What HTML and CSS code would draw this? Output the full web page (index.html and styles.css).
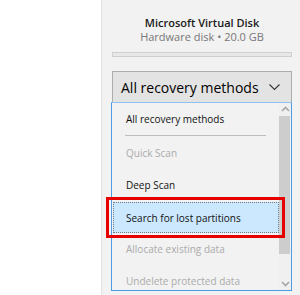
FILE: index.html
```html
<!DOCTYPE html>
<html>
<head>
<meta charset="utf-8">
<link rel="stylesheet" href="styles.css">
</head>
<body>
<div class="app">
  <div class="side"></div>
  <div class="panel">
    <div class="disk-title">Microsoft Virtual Disk</div>
    <div class="disk-sub">Hardware disk • 20.0 GB</div>
    <div class="progress"></div>
    <div class="combo">
      <span class="combo-text">All recovery methods</span>
      <svg class="chev" width="11" height="7" viewBox="0 0 11 7"><polyline points="0.5,0.5 5.5,5.5 10.5,0.5" fill="none" stroke="#333" stroke-width="1.1"/></svg>
    </div>
    <div class="list">
      <div class="items">
        <div class="item">All recovery methods</div>
        <div class="sep"></div>
        <div class="item disabled">Quick Scan</div>
        <div class="item">Deep Scan</div>
        <div class="item selected"><span class="sel-box">Search for lost partitions</span></div>
        <div class="item disabled">Allocate existing data</div>
        <div class="item disabled">Undelete protected data</div>
      </div>
      <div class="scrollbar">
        <svg class="arrow" width="9" height="6" viewBox="0 0 9 6"><polyline points="1,5 4.5,1.5 8,5" fill="none" stroke="#a6a6a6" stroke-width="1.6"/></svg>
        <div class="track"><div class="thumb"></div></div>
        <svg class="arrow" width="9" height="6" viewBox="0 0 9 6"><polyline points="1,1 4.5,4.5 8,1" fill="none" stroke="#a6a6a6" stroke-width="1.6"/></svg>
      </div>
    </div>
    <div class="highlight"></div>
  </div>
</div>
</body>
</html>
```
FILE: styles.css
```css
html, body {
  margin: 0;
  padding: 0;
}
body {
  width: 300px;
  height: 295px;
  overflow: hidden;
  font-family: "Open Sans", "Noto Sans", sans-serif;
}
.app {
  display: flex;
  height: 295px;
}
.side {
  width: 101px;
  background: #ffffff;
  border-right: 1px solid #e3e3e3;
}
.panel {
  position: relative;
  flex: 1;
  background: #f2f2f2;
  padding: 16px 8px 0 10px;
  display: flex;
  flex-direction: column;
}
.disk-title {
  font-size: 11px;
  font-weight: 600;
  line-height: 14px;
  text-align: center;
  color: #1a1a1a;
}
.disk-sub {
  font-size: 11px;
  line-height: 14px;
  text-align: center;
  color: #777777;
}
.progress {
  margin-top: 8px;
  height: 3px;
  border: 1px solid #cfcfcf;
  background: #e8e8e8;
}
.combo {
  margin-top: 14px;
  height: 29px;
  border: 1px solid #adadad;
  background: #e3e3e3;
  display: flex;
  align-items: center;
  justify-content: space-between;
  padding: 1px 11px 0 8px;
}
.combo-text {
  font-size: 14px;
  color: #000;
  line-height: 20px;
}
.chev {
  display: block;
}
.list {
  position: absolute;
  top: 102px;
  left: 9px;
  width: 179px;
  height: 187px;
  border: 1px solid #4d9be3;
  border-top-color: #8fc0ee;
  background: #f2f2f2;
  display: flex;
  overflow: hidden;
}
.items {
  width: 167px;
}
.item {
  height: 32px;
  display: flex;
  align-items: center;
  padding-left: 14px;
  font-size: 10px;
  color: #111;
}
.item.disabled {
  color: #ababab;
}
.sep {
  height: 1px;
  margin: 0 13px 1px 13px;
  background: #bdbdbd;
}
.item.selected {
  padding: 1px 0 0 1px;
  height: 31px;
  align-items: stretch;
}
.sel-box {
  flex: 1;
  display: flex;
  align-items: center;
  padding-left: 12px;
  background: #cce8ff;
  border: 1px dotted #6c7a8a;
}
.scrollbar {
  width: 12px;
  display: flex;
  flex-direction: column;
  align-items: center;
  background: #f0f0f0;
}
.arrow {
  display: block;
  margin: 3px 0;
}
.track {
  flex: 1;
  width: 100%;
  padding-top: 1px;
}
.thumb {
  height: 138px;
  width: 11px;
  background: #cdcdcd;
}
.highlight {
  position: absolute;
  left: 4px;
  top: 197px;
  width: 173px;
  height: 35px;
  border: 3px solid #e60000;
  pointer-events: none;
}
```
